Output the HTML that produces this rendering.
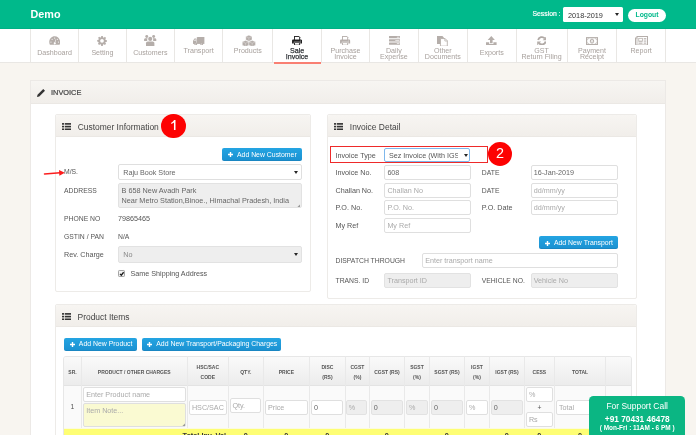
<!DOCTYPE html>
<html><head><meta charset="utf-8">
<style>
html,body{margin:0;padding:0}
body{width:696px;height:435px;overflow:hidden;background:#f8f5f0;font-family:"Liberation Sans",sans-serif;position:relative;color:#555;font-size:6.8px}
div,span,svg{position:absolute;box-sizing:border-box;white-space:nowrap}
#hdr{left:0;top:0;width:696px;height:29px;background:#00b98b;border-bottom:1px solid #00b085;box-shadow:0 1px 0 rgba(0,185,139,.35)}
#demo{left:30.5px;top:0;line-height:29px;font-size:10.8px;font-weight:bold;color:#fff}
#sess{-webkit-text-stroke:0.200px #fff;left:520px;width:40.5px;text-align:right;top:0;line-height:27.5px;font-size:6.8px;color:#fff}
#sesssel{left:563px;top:7px;width:59.5px;height:15px;background:#fff;border-radius:1.5px;color:#333;font-size:7.3px;line-height:17.800px;padding-left:5px}
.arr{width:0;height:0;border-left:2.100px solid transparent;border-right:2.100px solid transparent;border-top:3.700px solid #262626}
#logout{left:628px;top:8.8px;width:38px;height:13.2px;background:#fff;border-radius:7px;color:#00b98b;font-weight:bold;font-size:6.8px;line-height:12.400px;text-align:center}
#nav{left:0;top:29px;width:696px;height:34px;background:#fff;border-bottom:1px solid #e9e7e4}
.ni{top:0;height:33px;border-left:1px solid #e9e7e4;color:#a8a19d;font-size:7.1px;text-align:center}
.ni .t{left:0;width:100%;text-align:center;line-height:6.6px}
.ni.act{color:#33363a;-webkit-text-stroke:0.250px #33363a}
.ul{left:0.5px;top:33px;width:47.400px;height:1.8px;background:#f97f72}
#panel{left:30px;top:80px;width:636px;height:400px;background:#fff;border:1px solid #ece9e6}
#pin{left:0;top:0.5px;width:100%;height:100%}
.ph{left:0;top:0;width:100%;background:linear-gradient(#f7f5f2,#f1eeea);border-bottom:1px solid #ebe8e4}
.box{background:#fff;border:1px solid #edebe8;border-radius:2px}
.ttl{font-size:8.450px;color:#444}
.lbl{font-size:6.8px;color:#555;line-height:10px;margin-top:0.6px}
.inp{background:#fff;border:1px solid #dfdfdf;border-radius:2px;font-size:7.200px;color:#666;line-height:13.5px;padding-left:2.200px}
.ph2{color:#aaa}
.dis{background:#eee;border-color:#e2e2e2}
.btn{background:linear-gradient(#24a4e2,#1b92d2);border-radius:2px;color:#fff;font-size:6.900px;border-bottom:1px solid #1986c2;text-align:center;padding-left:1.2px}
.circ{background:#fd0202;border-radius:50%;color:#fff;text-align:center;font-size:14px}
.redbox{border:1px solid #ee2a2a}
.chk{background:#f3f3f3;border:0.600px solid #a5a5a5;border-radius:1.200px}
.tbl{border:1px solid #e7e7e7;border-radius:3px 3px 0 0;background:#fafafa}
.thd{background:linear-gradient(#fafafa,#ececec);border-bottom:1px solid #e3e3e3;border-radius:2px 2px 0 0}
.vl{background:#e9e9e9}
.th{font-size:5px;font-weight:bold;color:#555;text-align:center;line-height:9.800px}
.ytot{background:#fefe74}
.tot{font-size:7.300px;font-weight:bold;color:#333;line-height:10px}
#sup{left:589.000px;top:396.000px;width:96.400px;height:60px;background:#0bb683;border-radius:4.500px;color:#fff;text-align:center}
#root{left:0;top:0;width:696px;height:435px;will-change:transform}
</style></head><body><div id="root">
<div id="hdr"></div>
<div id="demo">Demo</div>
<div id="sess">Session :</div>
<div id="sesssel">2018-2019<div class="arr" style="left:51.800px;top:5.500px"></div></div>
<div id="logout">Logout</div>
<div id="nav">
<div class="ni" style="left:30.10px;width:47.90px"><svg style="left:17.85px;top:7.300px" viewBox="0 0 23 17" width="11.400" height="9.000" preserveAspectRatio="none"><path d="M11.5 0.5C5.4 0.5 0.5 5.4 0.5 11.5c0 1.9 .5 3.6 1.3 5.0h19.4c.8-1.4 1.3-3.1 1.3-5C22.5 5.4 17.6 .5 11.5 .5z" fill="#b5aeaa"/><g fill="#fff"><circle cx="4" cy="11.5" r="1.1"/><circle cx="6.3" cy="6.3" r="1.1"/><circle cx="11.5" cy="4" r="1.1"/><circle cx="16.7" cy="6.3" r="1.1"/><circle cx="19" cy="11.5" r="1.1"/><path d="M12.9 6.5l-1.4 5.300a2 2 0 1 0 1.200.3l1.300-5.300z"/></g></svg><div class="t" style="top:20.60px">Dashboard</div></div>
<div class="ni" style="left:78.00px;width:47.90px"><svg style="left:18.45px;top:7.00px" viewBox="0 0 20 20" width="10" height="9.6"><path d="M8.3 0h3.4l.5 2.7 1.6.7L16.1 1.8l2.4 2.4-1.6 2.3.7 1.6 2.7.5v3.4l-2.7.5-.7 1.6 1.6 2.3-2.4 2.4-2.3-1.6-1.6.7-.5 2.7H8.3l-.5-2.7-1.6-.7-2.3 1.6-2.4-2.4 1.6-2.3-.7-1.6L0 11.700V8.300l2.700-.5.7-1.600L1.800 3.900l2.400-2.400 2.300 1.600 1.600-.7z" fill="#b5aeaa"/><circle cx="10" cy="10" r="3.900" fill="#fff"/></svg><div class="t" style="top:20.60px">Setting</div></div>
<div class="ni" style="left:125.90px;width:47.90px"><svg style="left:17.40px;top:6.000px" viewBox="0 0 12.4 11" width="12.400" height="11.000"><g fill="#b5aeaa"><circle cx="2.750" cy="1.500" r="1.450"/><circle cx="9.650" cy="1.500" r="1.450"/><path d="M0.100 5.900V4.600C0.100 3.800 0.700 3.250 1.400 3.250H3.700C3.200 3.900 3.000 4.800 3.300 5.900z"/><path d="M12.300 5.900V4.600C12.300 3.800 11.700 3.250 11.000 3.250H8.700C9.200 3.900 9.400 4.800 9.100 5.900z"/><circle cx="6.200" cy="3.900" r="2.050"/><path d="M2.000 10.900V8.400C2.000 7.400 2.800 6.600 3.800 6.600H8.600C9.600 6.600 10.400 7.400 10.400 8.400V10.900z"/></g></svg><div class="t" style="top:20.60px">Customers</div></div>
<div class="ni" style="left:173.80px;width:48.60px"><svg style="left:18.50px;top:7.800px" viewBox="0 0 23 17" width="11.4" height="8.600"><g fill="#b5aeaa"><rect x="8" y="0" width="15" height="12.500" rx="1"/><path d="M0 12.500V7.500l3-4.500h4.200v9.500z"/><rect x="0" y="12" width="23" height="1.800"/><circle cx="5.500" cy="14" r="2.900"/><circle cx="17.500" cy="14" r="2.900"/></g><g fill="#fff"><path d="M2.200 7.200l1.500-2.300h1.700v2.300z"/><circle cx="5.500" cy="14" r="1.000"/><circle cx="17.500" cy="14" r="1.000"/></g></svg><div class="t" style="top:18.70px">Transport</div></div>
<div class="ni" style="left:222.40px;width:49.90px"><svg style="left:18.85px;top:5.60px" viewBox="0 0 27 23" width="13.800" height="11.800"><g fill="#b5aeaa" stroke="#fff" stroke-width="0.550"><path d="M13.500 0.500l6 2.600v6.200l-6 2.800-6-2.800V3.100z"/><path d="M7 10.800l6.300 2.600v6.400L7 22.600.700 19.800v-6.400z"/><path d="M20 10.800l6.300 2.600v6.400L20 22.600l-6.300-2.800v-6.400z"/><path d="M7.500 3.100l6 2.600 6-2.600M13.500 5.700v6.200M.7 13.400L7 16l6.300-2.600M7 16v6.500M13.700 13.400L20 16l6.300-2.600M20 16v6.500" fill="none"/></g></svg><div class="t" style="top:18.60px">Products</div></div>
<div class="ni act" style="left:272.30px;width:48.60px"><svg style="left:18.70px;top:6.90px" viewBox="0 0 20 19" width="10.200" height="9.600"><g fill="#1f1f1f"><path d="M4 0h9.500L16 2.500V8H4z"/><path d="M2.500 7h15C19 7 20 8 20 9.500V15h-3.500v-3.500h-13V15H0V9.500C0 8 1 7 2.500 7z"/><rect x="4" y="12.500" width="12" height="6.500"/></g><g fill="#fff"><rect x="5.800" y="1.800" width="8.400" height="5.200"/><rect x="5.800" y="14" width="8.400" height="3.200"/><circle cx="17" cy="9.800" r=".9"/></g></svg><div class="t" style="top:18.90px">Sale<br>Invoice</div><div class="ul"></div></div>
<div class="ni" style="left:320.90px;width:48.20px"><svg style="left:18.50px;top:6.90px" viewBox="0 0 20 19" width="10.200" height="9.600"><g fill="#b5aeaa"><path d="M4 0h9.500L16 2.500V8H4z"/><path d="M2.500 7h15C19 7 20 8 20 9.500V15h-3.500v-3.500h-13V15H0V9.500C0 8 1 7 2.500 7z"/><rect x="4" y="12.500" width="12" height="6.500"/></g><g fill="#fff"><rect x="5.800" y="1.800" width="8.400" height="5.200"/><rect x="5.800" y="14" width="8.400" height="3.200"/><circle cx="17" cy="9.800" r=".9"/></g></svg><div class="t" style="top:18.90px">Purchase<br>Invoice</div></div>
<div class="ni" style="left:369.10px;width:48.60px"><svg style="left:18.700px;top:7.000px" viewBox="0 0 22 19" width="11.500" height="8.800" preserveAspectRatio="none"><g fill="#b5aeaa"><rect x="0" y="0" width="22" height="5" rx=".8"/><rect x="0" y="7" width="22" height="5" rx=".8"/><rect x="0" y="14" width="22" height="5" rx=".8"/></g><g fill="#fff"><rect x="15" y="1.800" width="5" height="1.400"/><rect x="12" y="8.800" width="8" height="1.400"/><rect x="15" y="15.800" width="5" height="1.400"/></g></svg><div class="t" style="top:18.90px">Daily<br>Expense</div></div>
<div class="ni" style="left:417.70px;width:49.20px"><svg style="left:18.70px;top:6.50px" viewBox="0 0 22 21" width="10.800" height="10.500"><g fill="#b5aeaa"><path d="M0 0h11l3 3v13H0z"/></g><path d="M7 5h9.500L21 9.500V20.500H7z" fill="#fff" stroke="#b5aeaa" stroke-width="1.800"/><path d="M16 5v5h5" fill="none" stroke="#b5aeaa" stroke-width="1.500"/></svg><div class="t" style="top:18.90px">Other<br>Documents</div></div>
<div class="ni" style="left:466.90px;width:48.60px"><svg style="left:18.50px;top:6.70px" viewBox="0 0 10.6 9.8" width="10.600" height="9.800"><g fill="#b5aeaa"><path d="M5.300 0L8.900 3.900H6.600V7.200H4.000V3.900H1.700z"/><path d="M0 6.300H3.200V7.900H7.400V6.300H10.600V9.700H0z"/></g></svg><div class="t" style="top:20.60px">Exports</div></div>
<div class="ni" style="left:515.50px;width:51.20px"><svg style="left:20.20px;top:6.90px" viewBox="0 0 20 20" width="9.800" height="9.600"><g fill="none" stroke="#b0a9a5" stroke-width="3.900"><path d="M2.200 8.500A8 8 0 0 1 16 5"/><path d="M17.800 11.500A8 8 0 0 1 4 15"/></g><g fill="#b5aeaa"><path d="M19.800 0.500v8.200H11.600z"/><path d="M.2 19.500v-8.200H8.400z"/></g></svg><div class="t" style="top:18.80px">GST<br>Return Filing</div></div>
<div class="ni" style="left:566.70px;width:49.60px"><svg style="left:18.30px;top:7.50px" viewBox="0 0 24 16" width="12" height="8.200"><rect x="1.200" y="1.200" width="21.600" height="13.600" fill="none" stroke="#b5aeaa" stroke-width="2.400"/><ellipse cx="12" cy="8" rx="3.400" ry="4.000" fill="none" stroke="#b5aeaa" stroke-width="2.000"/><path d="M12 5.500v5" stroke="#b5aeaa" stroke-width="1.200"/><path d="M2 5a3.500 3.500 0 0 0 3.500-3M22 5a3.500 3.500 0 0 1-3.500-3M2 11a3.500 3.500 0 0 1 3.500 3M22 11a3.500 3.500 0 0 0-3.500 3" fill="none" stroke="#b5aeaa" stroke-width="1"/></svg><div class="t" style="top:18.80px">Payment<br>Receipt</div></div>
<div class="ni" style="left:616.30px;width:48.60px"><svg style="left:17.30px;top:6.70px" viewBox="0 0 26 19" width="13" height="9.600"><path d="M4 1h21v17H3a2 2 0 0 1-2-2V4h3z" fill="none" stroke="#b5aeaa" stroke-width="2.100"/><path d="M4 4v12" stroke="#b5aeaa" stroke-width="1.600"/><rect x="7.500" y="4.500" width="7.500" height="5.500" fill="none" stroke="#b5aeaa" stroke-width="1.500"/><path d="M17.500 5h5M17.500 8h5M17.500 11.500h5M17.500 14.500h5M7 11.500h8M7 14.500h8" stroke="#b5aeaa" stroke-width="1.700"/></svg><div class="t" style="top:18.70px">Report</div></div>
<div class="ni" style="left:664.90px;width:1px"></div>
</div>
<div id="panel"><div class="ph" style="height:22.5px"></div>
<div id="pin">
<svg viewBox="0 0 16 16" width="8" height="8" style="left:6.00px;top:7.00px"><path d="M0 16l1-4.500L11.500 1l3.500 3.500L4.500 15zM12.500 0l3.500 3.500-1 1L11.500 1z" fill="#333"/></svg>
<div class="lbl" style="left:20.00px;top:6.10px;font-size:7.400px;color:#444;-webkit-text-stroke:0.200px #444">INVOICE</div>
<div class="box" style="left:24.20px;top:32.70px;width:255.60px;height:177.40px;"><div class="ph" style="height:21.800px;border-radius:2px 2px 0 0"></div><svg viewBox="0 0 18 14" style="left:6.000px;top:7.600px" width="9.200" height="7.300"><g fill="#333"><rect x="0" y="0" width="4" height="3.200"/><rect x="0" y="5.300" width="4" height="3.200"/><rect x="0" y="10.600" width="4" height="3.200"/><rect x="5.500" y="0" width="12.500" height="3.200"/><rect x="5.500" y="5.300" width="12.500" height="3.200"/><rect x="5.500" y="10.600" width="12.500" height="3.200"/></g></svg><div class="ttl" style="left:21.500px;top:6.600px;line-height:10px">Customer Information</div></div>
<div class="circ" style="left:130.30px;top:32.30px;width:24.40px;height:24.20px;"><svg viewBox="0 0 5 10.2" width="5" height="10.2" style="left:9.300px;top:5.900px"><path d="M3.050 0H4.500V10.200H2.950V2.500C2.400 3.100 1.400 3.700 0.200 4.050V2.700C1.500 2.200 2.600 1.200 3.050 0Z" fill="#fff"/></svg></div>
<div class="btn" style="left:191.00px;top:66.50px;width:79.50px;height:12.80px;line-height:13px"><svg viewBox="0 0 10 10" width="5" height="5" style="position:relative;display:inline-block;vertical-align:-0.300px;margin-right:4px"><path d="M3.600 0h2.800v3.600H10v2.800H6.400V10H3.600V6.400H0V3.600h3.600z" fill="#fff"/></svg>Add New Customer</div>
<div class="lbl" style="left:33.00px;top:85.30px;">M/S.</div>
<div class="inp" style="left:87.00px;top:82.20px;width:183.50px;height:16.20px;line-height:15.50px;padding-left:4.200px;">Raju Book Store<div class="arr" style="right:2.700px;top:6.000px"></div></div>
<svg viewBox="0 0 23 10" width="23" height="10" style="left:12px;top:86.500px"><path d="M1.500 5.900L17 4.700" stroke="#fb1d1d" stroke-width="1.500" stroke-linecap="round"/><path d="M16.000 2.100L21.800 4.800L16.400 7.800z" fill="#fb1d1d"/></svg>
<div class="lbl" style="left:33.00px;top:103.50px;">ADDRESS</div>
<div class="inp dis" style="left:87.00px;top:101.20px;width:183.50px;height:25.20px;line-height:10.00px;padding:2.300px 0 0 2.500px;font-size:7.300px;white-space:normal">B 658 New Avadh Park<br>Near Metro Station,Binoe., Himachal Pradesh, India<svg viewBox="0 0 4 4" width="3" height="3" style="right:0.300px;bottom:0.300px"><path d="M4 0.500V4H0.500z" fill="#999"/></svg></div>
<div class="lbl" style="left:33.00px;top:131.80px;">PHONE NO</div>
<div class="lbl" style="left:87.00px;top:131.80px;font-size:7.200px">79865465</div>
<div class="lbl" style="left:33.00px;top:149.50px;">GSTIN / PAN</div>
<div class="lbl" style="left:87.00px;top:149.50px;">N/A</div>
<div class="lbl" style="left:33.00px;top:167.80px;font-size:7.200px">Rev. Charge</div>
<div class="inp dis" style="left:87.00px;top:164.50px;width:183.50px;height:16.90px;line-height:16.20px;color:#888;padding-left:4.200px;">No<div class="arr" style="right:2.700px;top:6.400px"></div></div>
<div class="chk" style="left:87.00px;top:188.50px;width:6.80px;height:6.80px;"><svg viewBox="0 0 10 10" width="5.600" height="5.600" style="left:0;top:0"><path d="M1.800 5.200l2.300 2.400 4.200-5.400" stroke="#1a1a1a" stroke-width="2.300" fill="none"/></svg></div>
<div class="lbl" style="left:99.50px;top:186.80px;font-size:7.200px">Same Shipping Address</div>
<div class="box" style="left:296.00px;top:32.70px;width:310.20px;height:184.60px;"><div class="ph" style="height:21.800px;border-radius:2px 2px 0 0"></div><svg viewBox="0 0 18 14" style="left:6.000px;top:7.600px" width="9.200" height="7.300"><g fill="#333"><rect x="0" y="0" width="4" height="3.200"/><rect x="0" y="5.300" width="4" height="3.200"/><rect x="0" y="10.600" width="4" height="3.200"/><rect x="5.500" y="0" width="12.500" height="3.200"/><rect x="5.500" y="5.300" width="12.500" height="3.200"/><rect x="5.500" y="10.600" width="12.500" height="3.200"/></g></svg><div class="ttl" style="left:21.800px;top:6.600px;line-height:10px">Invoice Detail</div></div>
<div class="redbox" style="left:299.00px;top:64.60px;width:158.00px;height:16.60px;"></div>
<div class="lbl" style="left:304.50px;top:68.50px;font-size:7.200px">Invoice Type</div>
<div class="inp" style="left:353.20px;top:66.40px;width:85.80px;height:14.40px;line-height:13.60px;border-color:#7fb8ec;color:#555;padding-left:0;"><span style="left:3.800px;top:0.500px;width:69.500px;height:12px;overflow:hidden;position:absolute">Sez Invoice (With IGST)</span><div class="arr" style="right:1.200px;top:5.000px"></div></div>
<div class="circ" style="left:457.10px;top:60.100px;width:24.20px;height:24.00px;line-height:22.200px;font-size:14.400px;text-indent:-0.5px">2</div>
<div class="lbl" style="left:304.50px;top:86.25px;font-size:7.200px">Invoice No.</div>
<div class="inp" style="left:353.20px;top:83.70px;width:86.80px;height:15.20px;line-height:14.50px;">608</div>
<div class="lbl" style="left:450.80px;top:86.25px;">DATE</div>
<div class="inp" style="left:499.50px;top:83.70px;width:87.00px;height:15.20px;line-height:14.50px;">16-Jan-2019</div>
<div class="lbl" style="left:304.50px;top:103.85px;font-size:7.200px">Challan No.</div>
<div class="inp ph2" style="left:353.20px;top:101.40px;width:86.80px;height:15.00px;line-height:14.30px;">Challan No</div>
<div class="lbl" style="left:450.80px;top:103.85px;">DATE</div>
<div class="inp ph2" style="left:499.50px;top:101.40px;width:87.00px;height:15.00px;line-height:14.30px;">dd/mm/yy</div>
<div class="lbl" style="left:304.50px;top:121.20px;font-size:7.200px">P.O. No.</div>
<div class="inp ph2" style="left:353.20px;top:118.80px;width:86.80px;height:14.90px;line-height:14.20px;">P.O. No.</div>
<div class="lbl" style="left:450.80px;top:121.20px;font-size:7.200px">P.O. Date</div>
<div class="inp ph2" style="left:499.50px;top:118.80px;width:87.00px;height:14.90px;line-height:14.20px;">dd/mm/yy</div>
<div class="lbl" style="left:304.50px;top:138.60px;font-size:7.200px">My Ref</div>
<div class="inp ph2" style="left:353.20px;top:136.20px;width:86.80px;height:14.90px;line-height:14.20px;">My Ref</div>
<div class="btn" style="left:507.60px;top:154.80px;width:79.40px;height:13.20px;line-height:13px"><svg viewBox="0 0 10 10" width="5" height="5" style="position:relative;display:inline-block;vertical-align:-0.300px;margin-right:4px"><path d="M3.600 0h2.800v3.600H10v2.800H6.400V10H3.600V6.400H0V3.600h3.600z" fill="#fff"/></svg>Add New Transport</div>
<div class="lbl" style="left:304.50px;top:173.70px;">DISPATCH THROUGH</div>
<div class="inp ph2" style="left:391.00px;top:171.20px;width:195.50px;height:14.90px;line-height:14.20px;">Enter transport name</div>
<div class="lbl" style="left:304.50px;top:194.00px;">TRANS. ID</div>
<div class="inp dis ph2" style="left:353.20px;top:191.50px;width:86.80px;height:14.90px;line-height:14.20px;">Transport ID</div>
<div class="lbl" style="left:450.80px;top:194.00px;">VEHICLE NO.</div>
<div class="inp dis ph2" style="left:499.50px;top:191.50px;width:87.00px;height:14.90px;line-height:14.20px;">Vehicle No</div>
<div class="box" style="left:24.00px;top:222.40px;width:582.300px;height:156.10px;"><div class="ph" style="height:22.200px;border-radius:2px 2px 0 0"></div><svg viewBox="0 0 18 14" style="left:6.200px;top:8.000px" width="9.200" height="7.300"><g fill="#333"><rect x="0" y="0" width="4" height="3.200"/><rect x="0" y="5.300" width="4" height="3.200"/><rect x="0" y="10.600" width="4" height="3.200"/><rect x="5.500" y="0" width="12.500" height="3.200"/><rect x="5.500" y="5.300" width="12.500" height="3.200"/><rect x="5.500" y="10.600" width="12.500" height="3.200"/></g></svg><div class="ttl" style="left:21.500px;top:6.900px;line-height:10px">Product Items</div></div>
<div class="btn" style="left:32.80px;top:256.80px;width:73.50px;height:12.50px;line-height:12.800px"><svg viewBox="0 0 10 10" width="5" height="5" style="position:relative;display:inline-block;vertical-align:-0.300px;margin-right:4px"><path d="M3.600 0h2.800v3.600H10v2.800H6.400V10H3.600V6.400H0V3.600h3.600z" fill="#fff"/></svg>Add New Product</div>
<div class="btn" style="left:111.00px;top:256.80px;width:139.40px;height:12.50px;line-height:12.800px"><svg viewBox="0 0 10 10" width="5" height="5" style="position:relative;display:inline-block;vertical-align:-0.300px;margin-right:4px"><path d="M3.600 0h2.800v3.600H10v2.800H6.400V10H3.600V6.400H0V3.600h3.600z" fill="#fff"/></svg>Add New Transport/Packaging Charges</div>
<div class="tbl" style="left:32.40px;top:274.30px;width:568.50px;height:113.50px;"></div>
<div class="thd" style="left:33.40px;top:275.30px;width:566.50px;height:29.30px;"></div>
<div class="ytot" style="left:33.00px;top:347.50px;width:567.00px;height:41.30px;box-shadow:0 -1px 0 rgba(254,254,116,.2)"></div>
<div class="vl" style="left:50.00px;top:274.80px;width:1.00px;height:71.70px;"></div>
<div class="vl" style="left:156.20px;top:274.80px;width:1.00px;height:71.70px;"></div>
<div class="vl" style="left:197.20px;top:274.80px;width:1.00px;height:71.70px;"></div>
<div class="vl" style="left:232.40px;top:274.80px;width:1.00px;height:71.70px;"></div>
<div class="vl" style="left:278.40px;top:274.80px;width:1.00px;height:71.70px;"></div>
<div class="vl" style="left:314.20px;top:274.80px;width:1.00px;height:71.70px;"></div>
<div class="vl" style="left:338.40px;top:274.80px;width:1.00px;height:71.70px;"></div>
<div class="vl" style="left:373.20px;top:274.80px;width:1.00px;height:71.70px;"></div>
<div class="vl" style="left:398.40px;top:274.80px;width:1.00px;height:71.70px;"></div>
<div class="vl" style="left:433.20px;top:274.80px;width:1.00px;height:71.70px;"></div>
<div class="vl" style="left:458.40px;top:274.80px;width:1.00px;height:71.70px;"></div>
<div class="vl" style="left:493.20px;top:274.80px;width:1.00px;height:71.70px;"></div>
<div class="vl" style="left:523.30px;top:274.80px;width:1.00px;height:71.70px;"></div>
<div class="vl" style="left:574.30px;top:274.80px;width:1.00px;height:71.70px;"></div>
<div class="th" style="left:33.00px;top:286.30px;width:17.00px;height:7.00px;">SR.</div>
<div class="th" style="left:50.00px;top:286.30px;width:106.50px;height:7.00px;">PRODUCT / OTHER CHARGES</div>
<div class="th" style="left:156.50px;top:281.40px;width:40.70px;height:7.00px;">HSC/SAC<br>CODE</div>
<div class="th" style="left:197.20px;top:286.30px;width:35.20px;height:7.00px;">QTY.</div>
<div class="th" style="left:232.40px;top:286.30px;width:46.00px;height:7.00px;">PRICE</div>
<div class="th" style="left:278.40px;top:281.40px;width:36.10px;height:7.00px;">DISC<br>(RS)</div>
<div class="th" style="left:314.50px;top:281.40px;width:23.90px;height:7.00px;">CGST<br>(%)</div>
<div class="th" style="left:338.40px;top:286.30px;width:35.10px;height:7.00px;">CGST (RS)</div>
<div class="th" style="left:373.50px;top:281.40px;width:24.90px;height:7.00px;">SGST<br>(%)</div>
<div class="th" style="left:398.40px;top:286.30px;width:35.10px;height:7.00px;">SGST (RS)</div>
<div class="th" style="left:433.50px;top:281.40px;width:24.90px;height:7.00px;">IGST<br>(%)</div>
<div class="th" style="left:458.40px;top:286.30px;width:35.10px;height:7.00px;">IGST (RS)</div>
<div class="th" style="left:493.50px;top:286.30px;width:29.80px;height:7.00px;">CESS</div>
<div class="th" style="left:523.30px;top:286.30px;width:51.50px;height:7.00px;">TOTAL</div>
<div class="lbl" style="left:33.00px;top:319.80px;width:17.00px;height:10.00px;text-align:center;line-height:10px">1</div>
<div class="inp ph2" style="left:52.40px;top:305.70px;width:102.60px;height:14.80px;line-height:14.40px;padding-left:1.800px;">Enter Product name</div>
<div class="inp ph2" style="left:52.40px;top:321.00px;width:102.60px;height:24.50px;background:#fafad2;line-height:13.00px;padding-left:1.800px">Item Note...<svg viewBox="0 0 4 4" width="3" height="3" style="right:0.300px;bottom:0.300px"><path d="M4 0.500V4H0.500z" fill="#999"/></svg></div>
<div class="inp ph2" style="left:158.10px;top:318.20px;width:37.60px;height:15.00px;line-height:14.40px;padding-left:1.800px;">HSC/SAC</div>
<div class="inp ph2" style="left:198.60px;top:316.70px;width:31.80px;height:15.00px;line-height:14.40px;padding-left:1.800px;">Qty.</div>
<div class="inp ph2" style="left:234.20px;top:318.20px;width:42.60px;height:15.00px;line-height:14.40px;padding-left:1.800px;">Price</div>
<div class="inp" style="left:280.30px;top:318.20px;width:32.10px;height:15.00px;line-height:14.40px;padding-left:1.800px;">0</div>
<div class="inp dis ph2" style="left:314.90px;top:318.20px;width:21.50px;height:15.00px;line-height:14.40px;padding-left:1.800px;">%</div>
<div class="inp dis" style="left:340.00px;top:318.20px;width:32.00px;height:15.00px;line-height:14.40px;padding-left:1.800px;">0</div>
<div class="inp dis ph2" style="left:375.10px;top:318.20px;width:21.50px;height:15.00px;line-height:14.40px;padding-left:1.800px;">%</div>
<div class="inp dis" style="left:400.10px;top:318.20px;width:31.90px;height:15.00px;line-height:14.40px;padding-left:1.800px;">0</div>
<div class="inp ph2" style="left:435.30px;top:318.20px;width:21.50px;height:15.00px;line-height:14.40px;padding-left:1.800px;">%</div>
<div class="inp dis" style="left:460.00px;top:318.20px;width:32.00px;height:15.00px;line-height:14.40px;padding-left:1.800px;">0</div>
<div class="inp ph2" style="left:495.10px;top:305.70px;width:26.80px;height:15.00px;line-height:14.40px;padding-left:1.800px;">%</div>
<div class="lbl" style="left:493.50px;top:320.20px;width:29.80px;height:10.00px;text-align:center;line-height:10px;color:#555;margin-top:1.5px">+</div>
<div class="inp ph2" style="left:495.10px;top:330.70px;width:26.80px;height:15.00px;line-height:14.40px;padding-left:1.800px;">Rs</div>
<div class="inp ph2" style="left:525.20px;top:318.20px;width:47.30px;height:15.00px;line-height:14.40px;padding-left:1.800px;">Total</div>
<div class="tot" style="margin-top:1.7px;left:119.00px;top:348.00px;width:76.00px;height:10.00px;text-align:right">Total Inv. Val</div>
<div class="tot" style="margin-top:1.7px;left:204.80px;top:348.00px;width:20.00px;height:10.00px;text-align:center">0</div>
<div class="tot" style="margin-top:1.7px;left:245.40px;top:348.00px;width:20.00px;height:10.00px;text-align:center">0</div>
<div class="tot" style="margin-top:1.7px;left:286.40px;top:348.00px;width:20.00px;height:10.00px;text-align:center">0</div>
<div class="tot" style="margin-top:1.7px;left:345.90px;top:348.00px;width:20.00px;height:10.00px;text-align:center">0</div>
<div class="tot" style="margin-top:1.7px;left:405.90px;top:348.00px;width:20.00px;height:10.00px;text-align:center">0</div>
<div class="tot" style="margin-top:1.7px;left:465.90px;top:348.00px;width:20.00px;height:10.00px;text-align:center">0</div>
<div class="tot" style="margin-top:1.7px;left:498.40px;top:348.00px;width:20.00px;height:10.00px;text-align:center">0</div>
<div class="tot" style="margin-top:1.7px;left:539.00px;top:348.00px;width:20.00px;height:10.00px;text-align:center">0</div>

</div></div>
<div id="sup"><div style="left:0;width:100%;top:5.400px;font-size:8.450px;line-height:10px">For Support Call</div><div style="left:0;width:100%;top:17.500px;font-size:8.300px;font-weight:bold;line-height:10px">+91 70431 46478</div><div style="left:0;width:100%;top:28.300px;font-size:6.450px;font-weight:bold;line-height:8px">( Mon-Fri : 11AM - 6 PM )</div></div>
</div></body></html>
